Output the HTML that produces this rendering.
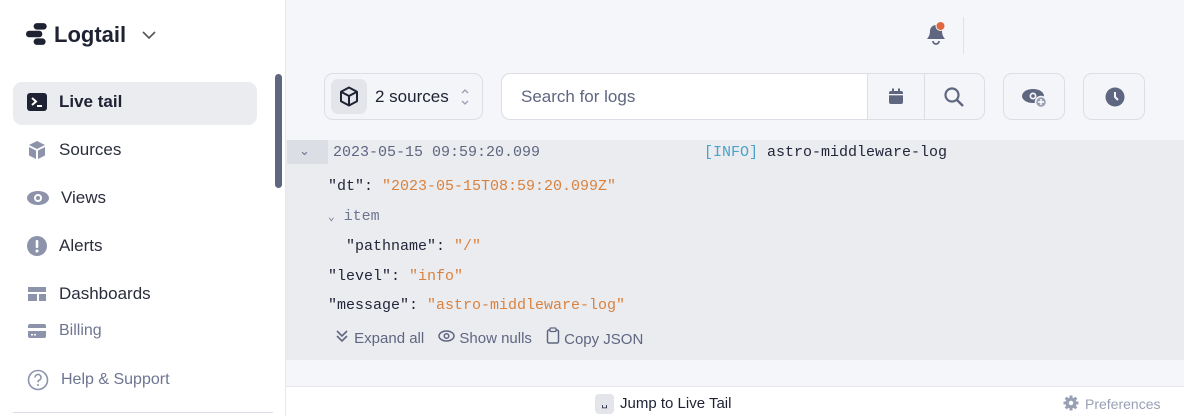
<!DOCTYPE html>
<html><head><style>
*{box-sizing:border-box;margin:0;padding:0}
body{width:1184px;height:416px;overflow:hidden;background:#f5f6fa;font-family:"Liberation Sans",sans-serif;position:relative}
.sb{position:absolute;left:0;top:0;width:286px;height:416px;background:#fff;border-right:1px solid #e6e7ec}
.logo{position:absolute;left:26px;top:22px;font-size:22px;font-weight:bold;color:#1e2233}
.nav{position:absolute;left:27px;font-size:17px;color:#2a2e3c;display:flex;align-items:center}
.nav svg{margin-right:12px}
.act{position:absolute;left:13px;top:82px;width:244px;height:43px;background:#ebecf0;border-radius:9px}
.sc{position:absolute;left:275px;top:74px;width:7px;height:114px;background:#5f6680;border-radius:4px}
.mono{font-family:"Liberation Mono",monospace;font-size:15px;position:absolute;color:#23263a}
.o{color:#d9823f}
.box{position:absolute;border:1px solid #dcdee5;border-radius:9px;background:#f4f5f9}
</style></head><body>
<div class="sb">
<div class="logo"><svg width="24" height="24" viewBox="0 0 22 22" style="vertical-align:-4px;margin-right:4px"><rect x="7" y="1" width="12" height="6" rx="3" fill="#1e2233"/><rect x="0" y="8" width="15" height="6" rx="3" fill="#1e2233"/><rect x="7" y="15" width="11" height="6" rx="3" fill="#1e2233"/></svg>Logtail <svg width="14" height="10" style="margin-left:10px;vertical-align:2px"><path d="M1 2l6 6 6-6" stroke="#555" stroke-width="1.6" fill="none"/></svg></div>
<div class="act"></div>
<div class="nav" style="top:92px;font-weight:bold;color:#1e2233"><svg width="20" height="18"><rect width="20" height="18" rx="3" fill="#1e2233"/><path d="M5 5l4 3.5-4 3.5M10 13h5" stroke="#fff" stroke-width="2" fill="none"/></svg>Live tail</div>
<div class="nav" style="top:140px"><svg width="20" height="20"><path d="M10 1l8 4-8 4-8-4z" fill="#8c93ab"/><path d="M2 7l7 3.5v8.5l-7-3.5zM18 7l-7 3.5v8.5l7-3.5z" fill="#8c93ab"/></svg>Sources</div>
<div class="nav" style="top:188px"><svg width="22" height="20"><ellipse cx="11" cy="10" rx="11" ry="7" fill="#8c93ab"/><circle cx="11" cy="10" r="4" fill="#fff"/><circle cx="11" cy="10" r="2" fill="#8c93ab"/></svg>Views</div>
<div class="nav" style="top:236px"><svg width="20" height="20"><circle cx="10" cy="10" r="10" fill="#8c93ab"/><rect x="8.7" y="4" width="2.6" height="8" rx="1" fill="#fff"/><circle cx="10" cy="15" r="1.5" fill="#fff"/></svg>Alerts</div>
<div class="nav" style="top:284px"><svg width="20" height="20"><rect x="1" y="3" width="18" height="5" fill="#8c93ab"/><rect x="1" y="10" width="9" height="7" fill="#8c93ab"/><rect x="12" y="10" width="7" height="7" fill="#8c93ab"/></svg>Dashboards</div>
<div class="nav" style="top:321px;color:#6e7590;font-size:16px"><svg width="20" height="20"><rect x="1" y="3" width="18" height="14" rx="2" fill="#8c93ab"/><rect x="1" y="7" width="18" height="3" fill="#fff"/><rect x="4" y="13" width="2" height="1.5" fill="#fff"/><rect x="7" y="13" width="2" height="1.5" fill="#fff"/></svg>Billing</div>
<div class="nav" style="top:369px;color:#6e7590;font-size:16px"><svg width="22" height="22"><circle cx="11" cy="11" r="9.5" stroke="#8c93ab" stroke-width="1.6" fill="none"/><path d="M8 8.5a3 3 0 1 1 4 2.8c-.8.4-1 1-1 2" stroke="#8c93ab" stroke-width="1.6" fill="none"/><circle cx="11" cy="16" r="1" fill="#8c93ab"/></svg>Help &amp; Support</div>
<div class="sc"></div>
<div style="position:absolute;left:13px;top:412px;width:260px;height:1px;background:#dcdee5"></div>
</div>
<svg style="position:absolute;left:924px;top:20px" width="24" height="28"><path d="M3 19c1.5-2 3-4 3-8a6 6 0 0 1 12 0c0 4 1.5 6 3 8z" fill="#5f6680"/><path d="M9 21a3 3 0 0 0 6 0" stroke="#5f6680" stroke-width="1.8" fill="none"/><circle cx="16.5" cy="6" r="4.5" fill="#e0673f" stroke="#f5f6fa" stroke-width="1"/></svg>
<div style="position:absolute;left:963px;top:17px;width:1px;height:37px;background:#e0e2e8"></div>
<div class="box" style="left:324px;top:73px;width:159px;height:47px"><div style="position:absolute;left:6px;top:5px;width:36px;height:35px;background:#e3e5eb;border-radius:7px"></div><svg style="position:absolute;left:14px;top:12px" width="20" height="21"><path d="M10 1.5l8 4.2v9.6l-8 4.2-8-4.2V5.7zM2 5.7l8 4.3 8-4.3M10 10v9.5" stroke="#1e2233" stroke-width="2" fill="none" stroke-linejoin="round"/></svg><span style="position:absolute;left:50px;top:13px;font-size:17px;color:#1e2233">2 sources</span><svg style="position:absolute;left:135px;top:13px" width="10" height="20"><path d="M2 6l3-3 3 3M2 14l3 3 3-3" stroke="#9aa0b4" stroke-width="1.3" fill="none"/></svg></div>
<div class="box" style="left:501px;top:73px;width:484px;height:47px;background:#f4f5f9"><div style="position:absolute;left:0;top:0;width:366px;height:45px;background:#fff;border-radius:9px 0 0 9px;border-right:1px solid #dcdee5"></div><span style="position:absolute;left:19px;top:13px;font-size:17px;color:#5f6680">Search for logs</span><div style="position:absolute;left:422px;top:0;width:1px;height:45px;background:#dcdee5"></div>
<svg style="position:absolute;left:386px;top:14px" width="16" height="17"><rect x="1" y="3" width="14" height="13" rx="2" fill="#5f6680"/><rect x="4" y="0.5" width="2" height="4" fill="#5f6680"/><rect x="10" y="0.5" width="2" height="4" fill="#5f6680"/><rect x="1" y="6" width="14" height="1.3" fill="#f4f5f9"/></svg>
<svg style="position:absolute;left:441px;top:12px" width="22" height="22"><circle cx="9" cy="9" r="6.5" stroke="#5f6680" stroke-width="2.2" fill="none"/><path d="M14 14l6 6" stroke="#5f6680" stroke-width="2.4"/></svg></div>
<div class="box" style="left:1003px;top:73px;width:62px;height:47px"><svg style="position:absolute;left:18px;top:13px" width="26" height="22"><ellipse cx="11" cy="9" rx="11" ry="7" fill="#5f6680"/><circle cx="11" cy="9" r="3.5" fill="#f4f5f9"/><circle cx="11" cy="9" r="1.8" fill="#5f6680"/><circle cx="19" cy="15" r="5.5" fill="#9aa0b4" stroke="#f4f5f9" stroke-width="1.5"/><path d="M19 12v6M16 15h6" stroke="#fff" stroke-width="1.4"/></svg></div>
<div class="box" style="left:1083px;top:73px;width:62px;height:47px"><svg style="position:absolute;left:21px;top:13px" width="20" height="20"><circle cx="10" cy="10" r="9.5" fill="#5f6680"/><path d="M10 5v5l3 3" stroke="#f4f5f9" stroke-width="2" fill="none"/></svg></div>
<div style="position:absolute;left:286px;top:140px;width:898px;height:220px;background:#ebecf0"></div>
<div style="position:absolute;left:287px;top:140px;width:41px;height:24px;background:#dcdee5"></div>
<span style="position:absolute;left:299px;top:143px;font-size:13px;color:#6e7590">&#8964;</span>
<div class="mono" style="left:333px;top:144px;color:#5f6680">2023-05-15 09:59:20.099</div>
<div class="mono" style="left:704px;top:144px"><span style="color:#4aa3c9">[INFO]</span> astro-middleware-log</div>
<div class="mono" style="left:328px;top:178px">"dt": <span class="o">"2023-05-15T08:59:20.099Z"</span></div>
<div class="mono" style="left:328px;top:208px;color:#6e7590"><span style="font-size:11px">&#8964;</span> item</div>
<div class="mono" style="left:346px;top:238px">"pathname": <span class="o">"/"</span></div>
<div class="mono" style="left:328px;top:268px">"level": <span class="o">"info"</span></div>
<div class="mono" style="left:328px;top:297px">"message": <span class="o">"astro-middleware-log"</span></div>
<div style="position:absolute;left:334px;top:327px;font-size:15px;color:#5f6680;display:flex;gap:14px;align-items:center">
<span><svg width="16" height="14"><path d="M3 2l5 5 5-5M3 7l5 5 5-5" stroke="#5f6680" stroke-width="1.6" fill="none"/></svg> Expand all</span>
<span><svg width="17" height="14"><ellipse cx="8.5" cy="7" rx="7.5" ry="5" stroke="#5f6680" stroke-width="1.5" fill="none"/><circle cx="8.5" cy="7" r="2.3" stroke="#5f6680" stroke-width="1.5" fill="none"/></svg> Show nulls</span>
<span><svg width="14" height="17"><rect x="1.5" y="3" width="11" height="13" rx="1.5" stroke="#5f6680" stroke-width="1.5" fill="none"/><rect x="4" y="1" width="6" height="3.5" rx="1" stroke="#5f6680" stroke-width="1.3" fill="#ebecf0"/></svg> Copy JSON</span></div>
<div style="position:absolute;left:286px;top:386px;width:898px;height:30px;background:#fff;border-top:1px solid #e6e7ec"></div>
<div style="position:absolute;left:595px;top:394px;width:19px;height:20px;background:#e3e5eb;border-radius:4px;font-size:10px;text-align:center;color:#1e2233;line-height:20px">&#9251;</div>
<span style="position:absolute;left:620px;top:395px;font-size:15px;color:#1e2233">Jump to Live Tail</span>
<svg style="position:absolute;left:1063px;top:395px" width="16" height="16"><circle cx="8" cy="8" r="5.5" fill="#9aa0b4"/><path d="M8 0.5v15M0.5 8h15M2.7 2.7l10.6 10.6M13.3 2.7L2.7 13.3" stroke="#9aa0b4" stroke-width="3"/><circle cx="8" cy="8" r="2.2" fill="#fff"/></svg>
<span style="position:absolute;left:1085px;top:396px;font-size:14px;color:#9aa0b4">Preferences</span>
</body></html>
